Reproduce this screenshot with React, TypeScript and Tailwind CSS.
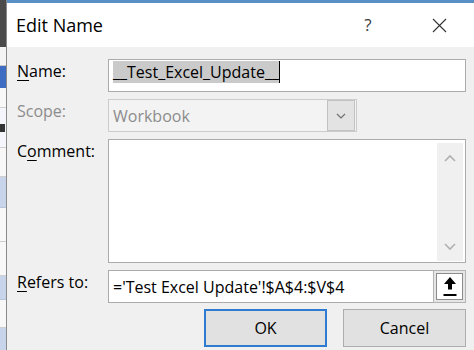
import React from "react";

function Strip() {
  return (
    <div className="w-[7px] h-[350px] flex flex-col shrink-0 border-r border-[#8a8a8a]">
      <div className="h-[47px] bg-[#4b4b4b]" />
      <div className="h-[19px] bg-[#f4f4f4] border-b border-[#c8c8c8]" />
      <div className="h-[22px] bg-[#3e6cc2]" />
      <div className="h-[20px] bg-[#f8f8f8] border-b border-[#cfcfcf]" />
      <div className="h-[40px] bg-[#f4f6fb] border-b border-[#cfcfcf] flex items-center">
        <div className="w-[5px] h-[8px] bg-[#333]" />
      </div>
      <div className="h-[29px] bg-[#f8f8f8] border-b border-[#cfcfcf]" />
      <div className="h-[31px] bg-[#c8d4ea] border-b border-[#b8c4da]" />
      <div className="h-[34px] bg-[#f8f8f8] border-b border-[#cfcfcf]" />
      <div className="h-[34px] bg-[#f8f8f8] border-b border-[#cfcfcf]" />
      <div className="h-[24px] bg-[#c8d4ea] border-b border-[#b8c4da]" />
      <div className="h-[28px] bg-[#f8f8f8] border-b border-[#cfcfcf]" />
      <div className="flex-1 bg-[#c8d4ea]" />
    </div>
  );
}

function Chevron({ dir, className }: { dir: "up" | "down"; className?: string }) {
  return (
    <svg width="12" height="8" viewBox="0 0 12 8" className={className}>
      <polyline
        points={dir === "up" ? "1,7 6,2 11,7" : "1,1 6,6 11,1"}
        fill="none"
        stroke="currentColor"
        strokeWidth="1.6"
      />
    </svg>
  );
}

export default function App() {
  return (
    <div className="w-[474px] h-[350px] flex overflow-hidden font-['Open_Sans',sans-serif] text-[#1a1a1a]">
      <Strip />
      <div className="flex-1 flex flex-col min-w-0">
        <div className="h-[3px] bg-[#5a8fc6]" />
        <div className="h-[44px] bg-white flex items-center pl-[9px]">
          <span className="text-[18px] leading-[24px] text-black">Edit Name</span>
          <span className="ml-auto w-[20px] text-center text-[17px] leading-[24px] font-normal text-[#3a3a3a]">?</span>
          <svg width="15" height="15" viewBox="0 0 15 15" className="ml-[54px] mr-[27px]">
            <path d="M1 1 L14 14 M14 1 L1 14" stroke="#333" strokeWidth="1.1" fill="none" />
          </svg>
        </div>
        <div className="flex-1 bg-[#f0f0f0] pt-[12px] pl-[10px] flex flex-col gap-[7px]">
          {/* Name */}
          <div className="flex items-start">
            <div className="w-[91px] pt-[1px] text-[16px] leading-[22px] text-black">
              <span className="underline underline-offset-[3px] decoration-1">N</span>ame:
            </div>
            <div className="w-[358px] h-[33px] bg-white border border-[#ababab] pl-[4px] pt-[1px] flex items-start">
              <span className="bg-[#cacaca] text-[16px] leading-[22px] text-black whitespace-pre">__Test_Excel_Update__</span>
              <span className="w-[1px] h-[22px] bg-black" />
            </div>
          </div>
          {/* Scope */}
          <div className="flex items-start">
            <div className="w-[91px] pt-[1px] text-[16px] leading-[22px] text-[#8c8c8c]">Scope:</div>
            <div className="w-[249px] h-[33px] bg-[#f3f3f3] border border-[#cccccc] flex items-center pl-[4px] pr-[1px]">
              <span className="text-[16px] leading-[22px] text-[#8c8c8c]">Workbook</span>
              <div className="ml-auto w-[28px] h-[31px] bg-[#e3e3e3] border border-[#c2c2c2] flex items-center justify-center text-[#707070]">
                <svg width="10" height="6" viewBox="0 0 10 6">
                  <polyline points="1,1 5,5 9,1" fill="none" stroke="currentColor" strokeWidth="1.2" />
                </svg>
              </div>
            </div>
          </div>
          {/* Comment */}
          <div className="flex items-start">
            <div className="w-[91px] pt-[1px] text-[16px] leading-[22px] text-black">
              C<span className="underline underline-offset-[3px] decoration-1">o</span>mment:
            </div>
            <div className="w-[358px] h-[124px] bg-white border border-[#ababab] flex justify-end pt-[3px] pb-[1px] pr-[2px]">
              <div className="w-[26px] h-full bg-[#f0f0f0] flex flex-col items-center justify-between pt-[11px] pb-[10px] text-[#b0b0b0]">
                <Chevron dir="up" />
                <Chevron dir="down" />
              </div>
            </div>
          </div>
          {/* Refers to */}
          <div className="flex items-start">
            <div className="w-[91px] pt-[1px] text-[16px] leading-[22px] text-black">
              <span className="underline underline-offset-[3px] decoration-1">R</span>efers to:
            </div>
            <div className="w-[325px] h-[33px] bg-white border border-[#ababab] border-r-0 pl-[4px] flex items-center">
              <span className="text-[16px] leading-[22px] text-black whitespace-pre">='Test Excel Update'!$A$4:$V$4</span>
            </div>
            <div className="w-[33px] h-[33px] border border-[#b4b4b4] bg-[#e6e6e6] p-[2px]">
              <div className="w-full h-full bg-white border border-[#8c8c8c] flex items-center justify-center">
                <svg width="14" height="20" viewBox="0 0 14 20">
                  <polygon points="7,0 13,7 1,7" fill="#000" />
                  <rect x="5" y="6.5" width="4" height="6" fill="#000" />
                  <rect x="0.5" y="17" width="13" height="2" fill="#000" />
                </svg>
              </div>
            </div>
          </div>
          {/* Buttons */}
          <div className="flex pl-[187px] gap-[16px] mt-[-1px]">
            <button className="w-[123px] h-[38px] bg-[#e1e1e1] border-2 border-[#2f7bd0] text-[16px] leading-[22px] text-black">
              OK
            </button>
            <button className="w-[123px] h-[38px] bg-[#e1e1e1] border border-[#adadad] text-[16px] leading-[22px] text-black">
              Cancel
            </button>
          </div>
        </div>
      </div>
    </div>
  );
}
